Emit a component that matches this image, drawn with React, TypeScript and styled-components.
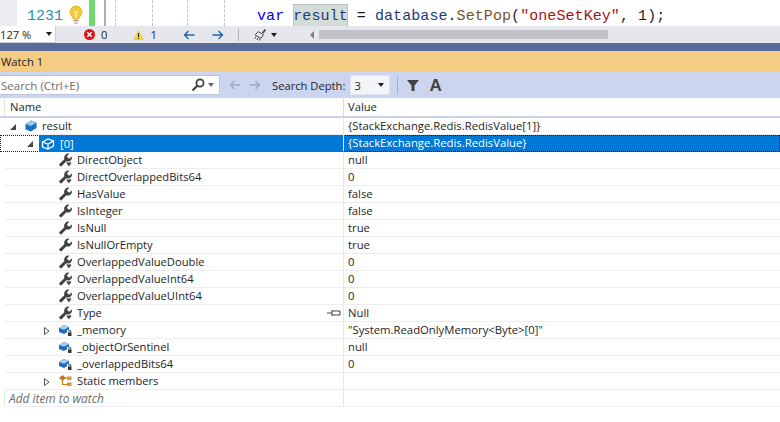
import React from "react";
import styled, { createGlobalStyle } from "styled-components";

const Global = createGlobalStyle`
  html, body { margin: 0; padding: 0; background: #fff; }
  body { width: 780px; height: 422px; overflow: hidden; font-family: "Open Sans", "Noto Sans", sans-serif; font-size: 11.2px; color: #1e1e1e; }
`;

const Page = styled.div`display: flex; flex-direction: column; width: 780px; height: 422px; overflow: hidden;`;

const Editor = styled.div`display: flex; height: 26px; background: #fff; flex: none;`;
const Margin = styled.div`width: 17px; background: #eeeef2; flex: none;`;
const LineNo = styled.div`padding-left: 10px; box-sizing: border-box; font: 15px/33px "Liberation Mono", monospace; color: #2b91af; flex: none; width: 51px;`;
const Bulb = styled.svg`width: 16px; height: 24px; flex: none; margin-top: 5px;`;
const Changed = styled.div`width: 6px; background: #6fd96f; margin-left: 5px; flex: none;`;
const Rule = styled.div`width: 2px; background: #b0b0b0; margin-left: 9px; flex: none;`;
const Guide = styled.div<{ $gap: number }>`width: 0; border-left: 1px dashed #c4c4c4; margin-left: ${p => p.$gap}px; flex: none;`;
const Code = styled.div`font: 15px/34px "Liberation Mono", monospace; white-space: pre; margin-left: 32px; letter-spacing: 0.07px; color: #1e1e1e;`;
const Kw = styled.span`color: #0000ff;`;
const Ident = styled.span`color: #1f377f;`;
const Mark = styled.span`color: #1f377f; background: #d3dcd6; outline: 1px solid #b8c4be; outline-offset: -1px; padding: 4px 0;`;
const Method = styled.span`color: #74531f;`;
const Str = styled.span`color: #a31515;`;

const StatusBar = styled.div`display: flex; align-items: center; height: 17px; background: #e6e7ed; flex: none; font-size: 11.2px;`;
const Zoom = styled.div`display: flex; align-items: center; justify-content: space-between; width: 56px; height: 17px; box-sizing: border-box; background: #fff; border-right: 1px solid #ccd0e0; border-bottom: 1px solid #ccd0e0; padding-right: 3px;`;
const Tri = styled.i<{ $c?: string }>`display: block; width: 0; height: 0; border-left: 3.5px solid transparent; border-right: 3.5px solid transparent; border-top: 4px solid ${p => p.$c || "#1e1e1e"}; flex: none;`;
const TriSlot = styled.span<{ $ml: number }>`display: block; flex: none; margin-left: ${p => p.$ml}px;`;
const Stat = styled.div<{ $ml: number }>`display: flex; align-items: center; gap: 6px; margin-left: ${p => p.$ml}px; color: #1e1e1e;`;
const IconSlot = styled.svg<{ $ml?: number }>`flex: none; margin-left: ${p => p.$ml || 0}px;`;
const Sep = styled.div`width: 1px; height: 13px; background: #b4b5bb; margin-left: 14px; flex: none;`;
const ScrollTrack = styled.div`display: flex; align-items: center; margin-left: 33px; flex: none;`;
const ScrollLeft = styled.i`display: block; width: 0; height: 0; border-top: 4px solid transparent; border-bottom: 4px solid transparent; border-right: 4px solid #7d7d84; margin-right: 5px;`;
const Thumb = styled.div`width: 289px; height: 9px; background: #c0c1c6;`;

const Band = styled.div`height: 8px; background: #5b6b99; flex: none;`;
const Title = styled.div`height: 21px; line-height: 21px; background: #f4cc84; flex: none; padding-left: 1px;`;
const Toolbar = styled.div`display: flex; align-items: center; height: 26px; background: #ccd5f0; flex: none;`;
const SearchBox = styled.div`display: flex; align-items: center; width: 220px; height: 20px; box-sizing: border-box; background: #fff; border: 1px solid #bcc4dc; border-left: 0; padding: 0 5px 0 1px; flex: none;`;
const Placeholder = styled.span`flex: 1; color: #6d6d6d; font-size: 11.5px;`;
const NavGroup = styled.div`display: flex; gap: 8px; margin-left: 9px; flex: none;`;
const Label = styled.span`margin-left: 11px; color: #1e1e1e;`;
const Depth = styled.div`display: flex; align-items: center; justify-content: space-between; width: 40px; height: 20px; box-sizing: border-box; background: #f3f5fb; border: 1px solid #dfe4f3; padding: 0 5px 0 3px; margin-left: 5px; flex: none;`;
const ToolSep = styled.div`width: 1px; height: 18px; background: #a9b2cc; margin-left: 7px; flex: none;`;
const Aa = styled.span`font: bold 17px/1 "Liberation Sans", sans-serif; color: #424242; margin-left: 10px;`;

const Grid = styled.div`display: flex; flex-direction: column; flex: none;`;
const Head = styled.div`display: grid; grid-template-columns: 344px 1fr; height: 20px; box-sizing: border-box; border-bottom: 2px solid #cdd3e6; flex: none;`;
const HeadCell = styled.div<{ $first?: boolean }>`line-height: 18px; padding-left: ${p => (p.$first ? 5 : 4)}px; border-left: ${p => (p.$first ? "1px solid #e4e4e4" : "0")}; border-right: ${p => (p.$first ? "1px solid #dcdcdc" : "0")}; margin-left: ${p => (p.$first ? "4px" : "0")};`;
const Row = styled.div<{ $sel?: boolean }>`display: grid; grid-template-columns: 344px 1fr; height: 17px; box-sizing: border-box; position: relative;
  ${p => p.$sel && "outline: 1px dotted #1e1e1e; outline-offset: -1px;"}`;
const NameCell = styled.div<{ $plain?: boolean }>`display: flex; align-items: center; height: 17px; box-sizing: border-box; margin-left: 5px; border-right: 1px solid #e6e6e6; border-bottom: 1px solid ${p => (p.$plain ? "transparent" : "#ededed")}; position: relative;`;
const ValueCell = styled.div<{ $sel?: boolean }>`display: flex; align-items: center; padding: 0 0 1px 4px; height: 17px; box-sizing: border-box; border-bottom: 1px solid #ededed; white-space: pre; font-size: 11.3px;
  ${p => p.$sel && "background: #0078d7; color: #fff; border-bottom-color: #0078d7;"}`;
const Expander = styled.span<{ $x: number }>`display: block; flex: none; width: 14px; margin-left: ${p => p.$x}px;`;
const NameText = styled.span<{ $sel?: boolean }>`margin-left: 4px; white-space: nowrap; line-height: 16px; ${p => p.$sel && "color: #fff; margin-left: 5px;"}`;
const SelBox = styled.div`display: flex; align-items: center; align-self: stretch; flex: 1; background: #0078d7; margin: 0 0 -1px -2px; padding-left: 2px;`;
const Pin = styled.svg`position: absolute; right: 2px; top: 4px;`;
const AddRow = styled.div`display: grid; grid-template-columns: 344px 1fr; height: 17px; box-sizing: border-box;`;
const AddCell = styled.div`margin-left: 4px; padding-left: 4px; line-height: 16px; font-style: italic; font-size: 11.9px; color: #6d6d6d; border-left: 1px solid #e4e4e4; border-right: 1px solid #e6e6e6; border-bottom: 1px solid #ededed;`;
const BlankCell = styled.div`border-bottom: 1px solid #ededed;`;

const IconSvg = styled.svg`flex: none;`;

const Cube = ({ light }: { light?: boolean }) => (
  <IconSvg width="14" height="14" viewBox="0 0 14 14">
    {light ? (
      <g fill="none" stroke="#fff" strokeWidth="1.3"><path d="M1.5 5l5.5-3 5.5 2v5l-5.5 3-5.5-2z" /><path d="M1.5 5l5.5 2 5.5-3M7 7v5" /></g>
    ) : (
      <g><path d="M1.5 5l5.5-3.5 5.5 2v5.5L7 12.5 1.5 10.5z" fill="#1b6ec2" /><path d="M1.5 5L7 7l5.5-3.5L7 1.5z" fill="#9cc6ea" /></g>
    )}
  </IconSvg>
);
const PrivateCube = () => (
  <IconSvg width="15" height="14" viewBox="0 0 15 14">
    <path d="M1 5l5-3 5 2v4l-5 3-5-2z" fill="#1b6ec2" />
    <path d="M1 5l5 1.8L11 4 6 2z" fill="#a9cdec" />
    <rect x="9" y="7" width="6" height="7" fill="#fff" />
    <path d="M10 9.5h3.5v3.5H10z" fill="#333" />
    <path d="M10.8 9.5V8.4a1 1 0 0 1 2 0v1.1" fill="none" stroke="#333" />
  </IconSvg>
);
const Wrench = ({ heart }: { heart?: boolean }) => (
  <IconSvg width="15" height="15" viewBox="0 0 15 15">
    <path d="M13.8 3.2A4.2 4.2 0 0 1 8.4 8.3L3 13.7.9 11.6 6.3 6.2A4.2 4.2 0 0 1 11.4.8L8.9 3.3 9.8 4.8 11.3 5.7z" fill="#424242" />
    {heart && <path d="M8.7 9.2c.8-.8 1.9-.5 2.2.4.3-.9 1.5-1.2 2.2-.4.8 1-.2 2.4-2.2 4.2-2-1.8-3-3.2-2.2-4.2z" fill="#424242" stroke="#fff" strokeWidth=".6" />}
  </IconSvg>
);
const Statics = () => (
  <IconSvg width="15" height="14" viewBox="0 0 15 14">
    <path d="M1 4l3.5-3L8 4 4.5 7z" fill="#c27d1a" />
    <path d="M4.5 6v4.5H9M6 4h4" stroke="#c27d1a" strokeWidth="1.2" fill="none" />
    <rect x="9" y="2.5" width="4.5" height="3.5" fill="#d9952e" />
    <rect x="9" y="8.5" width="4.5" height="3.5" fill="#d9952e" />
  </IconSvg>
);
const Arrow = ({ open }: { open?: boolean }) => (
  <svg width="6" height="8" viewBox="0 0 6 8">
    {open ? <path d="M0 7h6V1z" fill="#444" /> : <path d="M.5 0.5L5 4 .5 7.5z" fill="#fff" stroke="#555" />}
  </svg>
);
const NavArrow = ({ dir, c, ml }: { dir: "l" | "r"; c: string; ml?: number }) => (
  <IconSlot $ml={ml} width="12" height="10" viewBox="0 0 12 10">
    <path d={dir === "l" ? "M11.5 5H1.5M5.5 1L1.5 5l4 4" : "M.5 5h10M6.5 1l4 4-4 4"} fill="none" stroke={c} strokeWidth="1.4" />
  </IconSlot>
);

type Kind = "prop" | "heart" | "priv" | "static";
const rows: { name: string; value: string; kind: Kind; exp?: boolean; pin?: boolean }[] = [
  { name: "DirectObject", value: "null", kind: "heart" },
  { name: "DirectOverlappedBits64", value: "0", kind: "heart" },
  { name: "HasValue", value: "false", kind: "prop" },
  { name: "IsInteger", value: "false", kind: "prop" },
  { name: "IsNull", value: "true", kind: "prop" },
  { name: "IsNullOrEmpty", value: "true", kind: "prop" },
  { name: "OverlappedValueDouble", value: "0", kind: "heart" },
  { name: "OverlappedValueInt64", value: "0", kind: "heart" },
  { name: "OverlappedValueUInt64", value: "0", kind: "heart" },
  { name: "Type", value: "Null", kind: "heart", pin: true },
  { name: "_memory", value: '"System.ReadOnlyMemory<Byte>[0]"', kind: "priv", exp: true },
  { name: "_objectOrSentinel", value: "null", kind: "priv" },
  { name: "_overlappedBits64", value: "0", kind: "priv" },
  { name: "Static members", value: "", kind: "static", exp: true },
];

const kindIcon = (k: Kind) =>
  k === "prop" ? <Wrench /> : k === "heart" ? <Wrench heart /> : k === "priv" ? <PrivateCube /> : <Statics />;

export default function App() {
  return (
    <Page>
      <Global />
      <Editor>
        <Margin />
        <LineNo>1231</LineNo>
        <Bulb viewBox="0 0 16 24">
          <path d="M8 1a6 6 0 0 0-4 10.4c.8.8 1.2 1.6 1.2 2.6h5.6c0-1 .4-1.8 1.2-2.6A6 6 0 0 0 8 1z" fill="#f7c83c" stroke="#e8b320" />
          <path d="M6 6l2 2.5L10 6M8 8.5V13" stroke="#fff" fill="none" />
          <rect x="5.5" y="15" width="5" height="1.5" fill="#aaa" />
          <rect x="6" y="17.5" width="4" height="1.5" fill="#c4c4c4" />
        </Bulb>
        <Changed />
        <Rule />
        <Guide $gap={9} />
        <Guide $gap={36} />
        <Guide $gap={34} />
        <Guide $gap={36} />
        <Code>
          <Kw>var</Kw> <Mark>result</Mark> = <Ident>database</Ident>.<Method>SetPop</Method>(<Str>"oneSetKey"</Str>, 1);
        </Code>
      </Editor>
      <StatusBar>
        <Zoom>127 %<Tri /></Zoom>
        <Stat $ml={28}>
          <svg width="11" height="11" viewBox="0 0 11 11"><circle cx="5.5" cy="5.5" r="5.5" fill="#d5161d" /><path d="M3.3 3.3l4.4 4.4M7.7 3.3L3.3 7.7" stroke="#fff" strokeWidth="1.5" /></svg>
          <span>0</span>
        </Stat>
        <Stat $ml={26}>
          <svg width="11" height="10" viewBox="0 0 11 10"><path d="M5.5 0L11 10H0z" fill="#f8d02e" /><path d="M5.5 3v4M5.5 8v1" stroke="#222" /></svg>
          <span>1</span>
        </Stat>
        <NavArrow dir="l" c="#1b64ad" ml={26} />
        <NavArrow dir="r" c="#1b64ad" ml={17} />
        <Sep />
        <IconSlot $ml={15} width="13" height="13" viewBox="0 0 13 13">
          <path d="M8 4.5l2.6-3.6 1.4 1L9.6 5.6" fill="#444" />
          <path d="M4.2 3.6L9.4 6.6 7 10.4 1.2 7z" fill="#ececec" stroke="#444" />
          <path d="M2 8.5L.8 10.6M4 9.8L3 12M6 10.6L5.4 12.6" stroke="#444" />
        </IconSlot>
        <TriSlot $ml={4}><Tri /></TriSlot>
        <ScrollTrack>
          <ScrollLeft />
          <Thumb />
        </ScrollTrack>
      </StatusBar>
      <Band />
      <Title>Watch 1</Title>
      <Toolbar>
        <SearchBox>
          <Placeholder>Search (Ctrl+E)</Placeholder>
          <svg width="14" height="14" viewBox="0 0 14 14"><circle cx="9" cy="5" r="3.6" fill="none" stroke="#424242" strokeWidth="1.8" /><path d="M6.3 7.7L1.5 12.5" stroke="#424242" strokeWidth="2.2" /></svg>
          <TriSlot $ml={3}><Tri $c="#666" /></TriSlot>
        </SearchBox>
        <NavGroup>
          <NavArrow dir="l" c="#a2a9bb" />
          <NavArrow dir="r" c="#a2a9bb" />
        </NavGroup>
        <Label>Search Depth:</Label>
        <Depth>3<Tri /></Depth>
        <ToolSep />
        <IconSlot $ml={9} width="12" height="12" viewBox="0 0 12 12"><path d="M0 1h12L7.5 6.5V12h-3V6.5z" fill="#424242" /></IconSlot>
        <Aa>A</Aa>
      </Toolbar>
      <Grid>
        <Head>
          <HeadCell $first>Name</HeadCell>
          <HeadCell>Value</HeadCell>
        </Head>
        <Row>
          <NameCell>
            <Expander $x={5}><Arrow open /></Expander>
            <Cube />
            <NameText>result</NameText>
          </NameCell>
          <ValueCell>{"{StackExchange.Redis.RedisValue[1]}"}</ValueCell>
        </Row>
        <Row $sel>
          <NameCell $plain>
            <Expander $x={22}><Arrow open /></Expander>
            <SelBox>
              <Cube light />
              <NameText $sel>[0]</NameText>
            </SelBox>
          </NameCell>
          <ValueCell $sel>{"{StackExchange.Redis.RedisValue}"}</ValueCell>
        </Row>
        {rows.map(r => (
          <Row key={r.name}>
            <NameCell>
              <Expander $x={39}>{r.exp && <Arrow />}</Expander>
              {kindIcon(r.kind)}
              <NameText>{r.name}</NameText>
              {r.pin && (
                <Pin width="14" height="8" viewBox="0 0 14 8"><path d="M0 4h5M5 1v6M5 2h8v4H5" fill="none" stroke="#424242" /></Pin>
              )}
            </NameCell>
            <ValueCell>{r.value}</ValueCell>
          </Row>
        ))}
        <AddRow>
          <AddCell>Add item to watch</AddCell>
          <BlankCell />
        </AddRow>
      </Grid>
    </Page>
  );
}
